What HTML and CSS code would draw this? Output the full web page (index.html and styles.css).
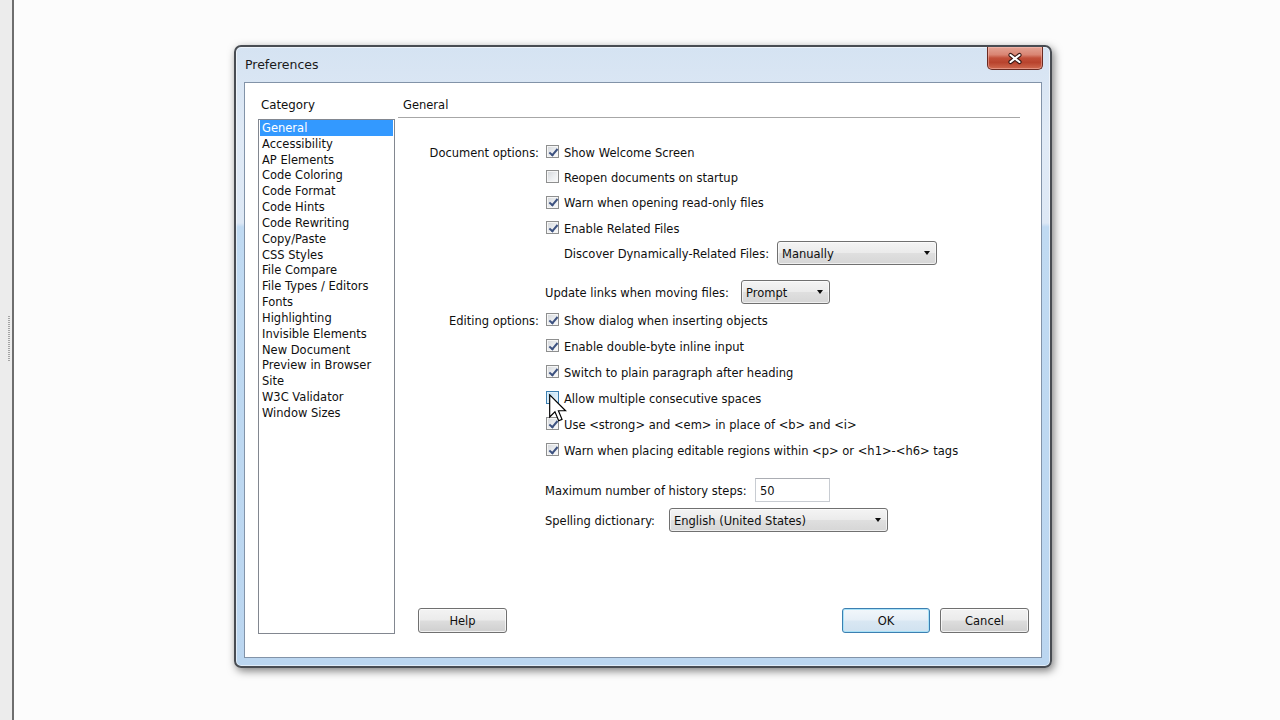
FILE: index.html
```html
<!DOCTYPE html>
<html>
<head>
<meta charset="utf-8">
<title>Preferences</title>
<link rel="stylesheet" href="styles.css">
</head>
<body>
<div class="desktop">
  <div class="sidebar"><div class="grip"></div></div>

  <div class="dialog">
    <div class="titlebar">
      <span class="title">Preferences</span>
      <div class="close">
        <svg width="16" height="13" viewBox="0 0 16 13">
          <path d="M3.5 3 L12.5 10 M12.5 3 L3.5 10" stroke="#3a1a16" stroke-width="4.2" stroke-linecap="round"/>
          <path d="M3.5 3 L12.5 10 M12.5 3 L3.5 10" stroke="#ffffff" stroke-width="2.1" stroke-linecap="round"/>
        </svg>
      </div>
    </div>

    <div class="client">
      <div class="cat-col">
        <div class="cat-label">Category</div>
        <ul class="cat-list">
          <li class="sel">General</li>
          <li>Accessibility</li>
          <li>AP Elements</li>
          <li>Code Coloring</li>
          <li>Code Format</li>
          <li>Code Hints</li>
          <li>Code Rewriting</li>
          <li>Copy/Paste</li>
          <li>CSS Styles</li>
          <li>File Compare</li>
          <li>File Types / Editors</li>
          <li>Fonts</li>
          <li>Highlighting</li>
          <li>Invisible Elements</li>
          <li>New Document</li>
          <li>Preview in Browser</li>
          <li>Site</li>
          <li>W3C Validator</li>
          <li>Window Sizes</li>
        </ul>
      </div>

      <div class="panel">
        <div class="panel-head">General</div>

        <div class="form">
          <div class="row doc">
            <span class="lbl">Document options:</span>
            <span class="cb on"></span><span class="cb-text">Show Welcome Screen</span>
          </div>
          <div class="row doc">
            <span class="lbl"></span>
            <span class="cb"></span><span class="cb-text">Reopen documents on startup</span>
          </div>
          <div class="row doc">
            <span class="lbl"></span>
            <span class="cb on"></span><span class="cb-text">Warn when opening read-only files</span>
          </div>
          <div class="row doc">
            <span class="lbl"></span>
            <span class="cb on"></span><span class="cb-text">Enable Related Files</span>
          </div>
          <div class="row doc">
            <span class="lbl"></span>
            <span class="flabel w-discover">Discover Dynamically-Related Files:</span>
            <div class="combo w160"><span>Manually</span><i class="arrow"></i></div>
          </div>

          <div class="row update">
            <span class="lbl"></span>
            <span class="flabel w-update">Update links when moving files:</span>
            <div class="combo w89"><span>Prompt</span><i class="arrow"></i></div>
          </div>

          <div class="row edit first">
            <span class="lbl">Editing options:</span>
            <span class="cb on"></span><span class="cb-text">Show dialog when inserting objects</span>
          </div>
          <div class="row edit">
            <span class="lbl"></span>
            <span class="cb on"></span><span class="cb-text">Enable double-byte inline input</span>
          </div>
          <div class="row edit">
            <span class="lbl"></span>
            <span class="cb on"></span><span class="cb-text">Switch to plain paragraph after heading</span>
          </div>
          <div class="row edit">
            <span class="lbl"></span>
            <span class="cb hover"></span><span class="cb-text">Allow multiple consecutive spaces</span>
          </div>
          <div class="row edit">
            <span class="lbl"></span>
            <span class="cb on"></span><span class="cb-text">Use &lt;strong&gt; and &lt;em&gt; in place of &lt;b&gt; and &lt;i&gt;</span>
          </div>
          <div class="row edit">
            <span class="lbl"></span>
            <span class="cb on"></span><span class="cb-text">Warn when placing editable regions within &lt;p&gt; or &lt;h1&gt;-&lt;h6&gt; tags</span>
          </div>

          <div class="row history">
            <span class="lbl"></span>
            <span class="flabel w-history">Maximum number of history steps:</span>
            <div class="textbox">50</div>
          </div>
          <div class="row spelling">
            <span class="lbl"></span>
            <span class="flabel w-spelling">Spelling dictionary:</span>
            <div class="combo w219"><span>English (United States)</span><i class="arrow"></i></div>
          </div>
        </div>

        <div class="buttons">
          <div class="btn">Help</div>
          <div class="btn-group">
            <div class="btn default">OK</div>
            <div class="btn">Cancel</div>
          </div>
        </div>
      </div>
    </div>
  </div>

  <svg class="cursor" width="18" height="28" viewBox="0 0 13 20">
    <path d="M0.5 0.5 L0.5 16.5 L4.3 12.8 L7 19.2 L9.4 18.2 L6.8 12 L12 12 Z" fill="#ffffff" stroke="#000000" stroke-width="0.85" stroke-linejoin="miter"/>
  </svg>
</div>
</body>
</html>
```

FILE: styles.css
```css
* { box-sizing: border-box; }

html, body {
  margin: 0;
  padding: 0;
}

body {
  font-family: "DejaVu Sans", "Liberation Sans", sans-serif;
  font-size: 11.5px;
  color: #0f0f0f;
  background: #fcfcfc;
}

.desktop {
  position: relative;
  width: 1280px;
  height: 720px;
  overflow: hidden;
  background: #fcfcfc;
}

.sidebar {
  width: 14px;
  height: 720px;
  background: #ececec;
  border-right: 2px solid #6e6e6e;
  padding-top: 316px;
}

.grip {
  margin-left: 8px;
  width: 2px;
  height: 46px;
  background: repeating-linear-gradient(to bottom, #a4a4a4 0, #a4a4a4 1px, transparent 1px, transparent 2px);
}

/* ---------- dialog window ---------- */
.dialog {
  position: absolute;
  left: 234px;
  top: 45px;
  width: 818px;
  height: 623px;
  border: 2px solid #484c52;
  border-radius: 7px;
  background: linear-gradient(to bottom, #d5e3f2 0, #e0eaf6 90px, #dde8f5 176px, #c0daf2 180px, #bbd6f0 100%);
  box-shadow: 2px 3px 9px rgba(0, 0, 0, 0.5), inset 0 0 0 1px rgba(255, 255, 255, 0.55);
  display: flex;
  flex-direction: column;
}

.titlebar {
  height: 35px;
  display: flex;
  align-items: flex-start;
}

.title {
  padding: 10px 0 0 9px;
  font-size: 12.5px;
  line-height: 16px;
  color: #1a1a1a;
}

.close {
  margin-left: auto;
  margin-right: 7px;
  width: 56px;
  height: 23px;
  border: 1px solid #6a2b22;
  border-top: none;
  border-radius: 0 0 5px 5px;
  background: linear-gradient(to bottom, #e3a394 0, #d98573 35%, #c2503a 50%, #b8432d 70%, #cf6a50 100%);
  box-shadow: inset 0 0 0 1px rgba(255, 200, 190, 0.45);
  display: flex;
  align-items: center;
  justify-content: center;
}

.close svg { display: block; }

.client {
  margin: 0 8px 8px 8px;
  height: 576px;
  background: #ffffff;
  border: 1px solid #8293a8;
  padding: 14px 0 0 13px;
  display: flex;
  align-items: flex-start;
}

/* ---------- category list ---------- */
.cat-col {
  width: 137px;
  flex: none;
}

.cat-label {
  padding-left: 3px;
  line-height: 16px;
  height: 16px;
  margin-bottom: 6px;
  font-size: 11.8px;
}

.cat-list {
  list-style: none;
  margin: 0;
  padding: 0 1px 1px 1px;
  height: 515px;
  border: 1px solid #828790;
}

.cat-list li {
  height: 15.83px;
  line-height: 17.5px;
  padding-left: 2px;
  white-space: nowrap;
}

.cat-list li.sel {
  background: #3399ff;
  color: #ffffff;
}

/* ---------- right panel ---------- */
.panel {
  margin-left: 3px;
  width: 632px;
  flex: none;
  display: flex;
  flex-direction: column;
}

.panel-head {
  padding-left: 5px;
  line-height: 16px;
  padding-bottom: 4px;
  border-bottom: 1px solid #a7a7a7;
  margin-right: 10px;
}

.form {
  margin-top: 21px;
  display: flex;
  flex-direction: column;
}

.row {
  display: flex;
  align-items: center;
  white-space: nowrap;
}

.row.doc { height: 25.33px; }
.row.update { height: 26px; margin-top: 13px; }
.row.edit { height: 26px; }
.row.edit.first { margin-top: 2px; }
.row.history { height: 26px; margin-top: 14px; }
.row.spelling { height: 26px; margin-top: 4px; }

.lbl, .cb-text, .flabel {
  line-height: 16px;
  padding-top: 2px;
}

.lbl {
  width: 141px;
  margin-right: 6px;
  text-align: right;
  flex: none;
}

/* checkboxes */
.cb {
  position: relative;
  flex: none;
  width: 13px;
  height: 13px;
  margin-left: 1px;
  margin-right: 5px;
  border: 1px solid #8e8f8f;
  background: linear-gradient(135deg, #d3d6da 0%, #eceef0 55%, #fbfbfb 100%);
  box-shadow: inset 0 0 0 1px #f6f6f6;
}

.cb.on::after {
  content: "";
  position: absolute;
  left: 3.5px;
  top: 0.5px;
  width: 3px;
  height: 7px;
  border-right: 2px solid #3d5280;
  border-bottom: 2px solid #3d5280;
  transform: rotate(40deg);
}

.cb.hover {
  border-color: #3c7fb1;
  background: linear-gradient(135deg, #b6d9f1 0%, #d8ecf9 55%, #eef7fd 100%);
  box-shadow: inset 0 0 0 1px #def0fb;
}

/* field labels */
.flabel { flex: none; }
.w-discover { width: 232px; padding-left: 19px; }
.w-update { width: 196px; }
.w-history { width: 210px; }
.w-spelling { width: 124px; }

/* combo boxes */
.combo {
  height: 24px;
  border: 1px solid #707070;
  border-radius: 3px;
  background: linear-gradient(to bottom, #f4f4f4 0, #ebebeb 48%, #dfdfdf 52%, #d6d6d6 100%);
  box-shadow: inset 0 0 0 1px rgba(255, 255, 255, 0.6);
  display: flex;
  align-items: center;
  justify-content: space-between;
  padding: 0 6px 0 4px;
  flex: none;
}

.combo span {
  line-height: 16px;
  padding-top: 2px;
}

.w160 { width: 160px; }
.w89 { width: 89px; }
.w219 { width: 219px; }

.arrow {
  width: 0;
  height: 0;
  border-left: 3.5px solid transparent;
  border-right: 3.5px solid transparent;
  border-top: 4px solid #0d0d0d;
}

.textbox {
  width: 75px;
  height: 24px;
  border: 1px solid #c8ccd2;
  border-top-color: #abadb3;
  padding: 1px 0 0 4px;
  line-height: 22px;
  background: #ffffff;
}

/* buttons */
.buttons {
  margin-top: 75px;
  padding: 0 1px 0 20px;
  display: flex;
  justify-content: space-between;
}

.btn-group {
  display: flex;
  gap: 10px;
}

.btn {
  width: 89px;
  height: 25px;
  border: 1px solid #707070;
  border-radius: 3px;
  background: linear-gradient(to bottom, #f3f3f3 0, #ebebeb 48%, #dddddd 52%, #cfcfcf 100%);
  box-shadow: inset 0 0 0 1px rgba(255, 255, 255, 0.7);
  display: flex;
  align-items: center;
  justify-content: center;
  line-height: 16px;
  padding-top: 2px;
}

.btn-group .btn.default {
  width: 88px;
  border-color: #3c7fb1;
  background: linear-gradient(to bottom, #f2f7fb 0, #e6eff7 48%, #d9e7f3 52%, #d0e2f0 100%);
  box-shadow: inset 0 0 0 1px #a9e2f8;
}

/* mouse pointer */
.cursor {
  position: absolute;
  left: 549px;
  top: 394px;
  display: block;
}
```
